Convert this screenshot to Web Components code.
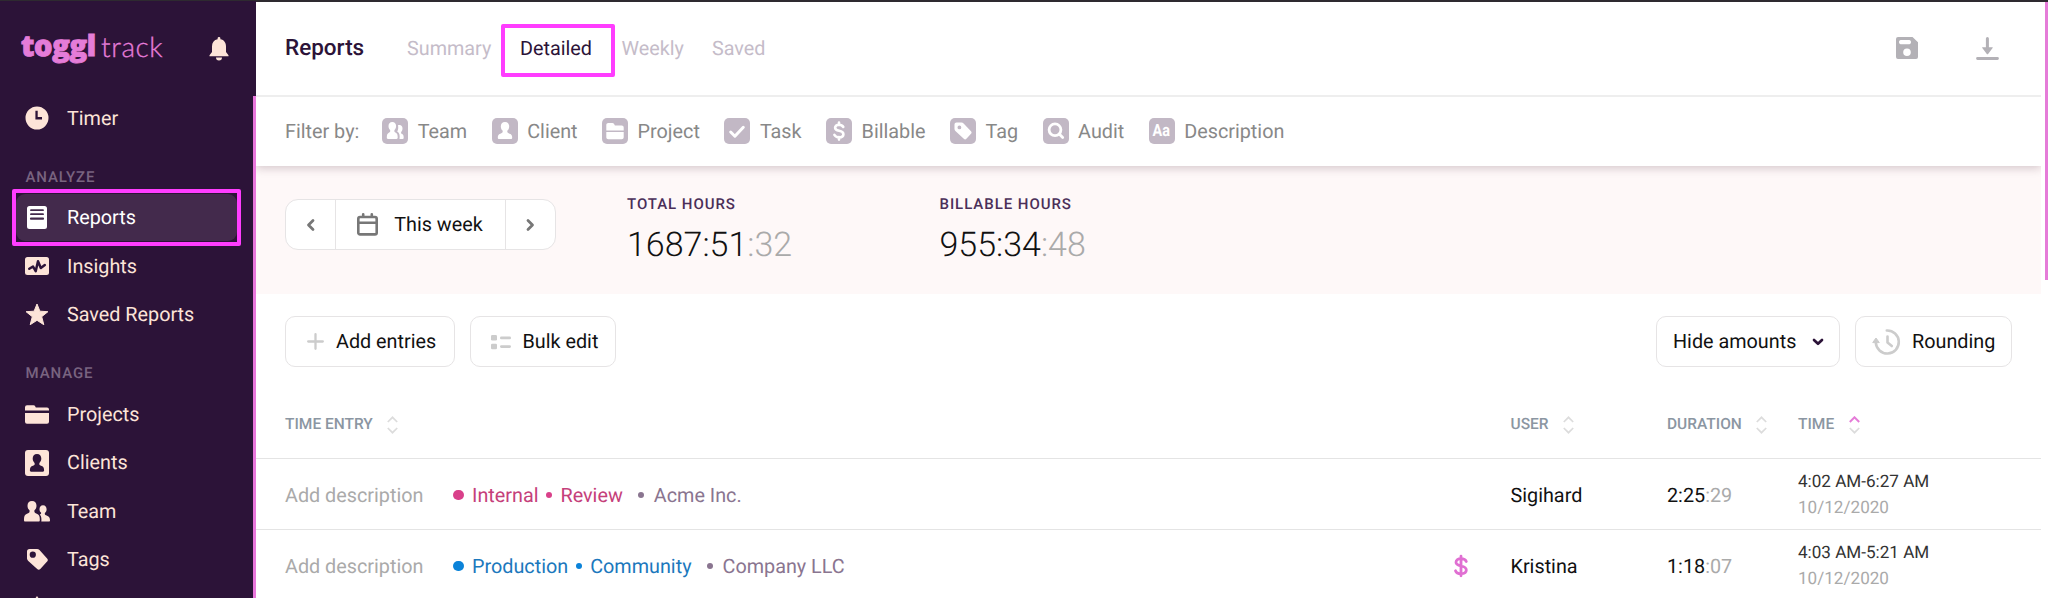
<!DOCTYPE html>
<html lang="en">
<head>
<meta charset="utf-8">
<title>Toggl Track - Reports</title>
<style>
    body {
        margin: 0;
        height: 598px;
        overflow: hidden;
        background: white;
        font-family: Roboto, sans-serif;
        font-size: 19.8px;
        text-rendering: geometricPrecision;
    }
</style>
</head>
<body>
<track-app></track-app>

<script>
// viewBox + content for every icon, all filled with currentColor
const ICONS = {
    bell: ["0 0 20 24", `<path d="M8.6 2.2V1.4a1.4 1.4 0 0 1 2.8 0v.8c3.700.7 5.600 3.300 5.600 7.300v5.500l2.500 3.300v.900H.500v-.900L3 15V9.500c0-4 1.900-6.600 5.600-7.300zM7 20.500h6a3 3 0 0 1-6 0z"/>`],
    clock: ["0 0 24 24", `<path fill-rule="evenodd" d="M12 .5a11.500 11.500 0 1 0 0 23 11.500 11.500 0 0 0 0-23zm-1.600 4.300h2.300v6.300h4.300v2.300h-6.600z"/>`],
    report: ["0 0 20 23", `<path fill-rule="evenodd" d="M2.500 0h15A2.500 2.500 0 0 1 20 2.500v18a2.500 2.500 0 0 1-2.500 2.500h-15A2.500 2.500 0 0 1 0 20.500v-18A2.500 2.500 0 0 1 2.500 0zM4 3.300a.9.9 0 0 0 0 1.800h12a.9.9 0 0 0 0-1.800zM4 7.200A.9.9 0 0 0 4 9.100h12a.9.9 0 0 0 0-1.900zM4 11.600a.9.9 0 0 0 0 2.200h12a.9.9 0 0 0 0-2.200z"/>`],
    pulse: ["0 0 24 18", `<rect width="24" height="18" rx="2.500"/><path d="M4.300 11.800l3.700-2.300 2.700 4.700L13 4.300l2.800 6.700 4-3" fill="none" stroke="#2c1338" stroke-width="2.500" stroke-linecap="round" stroke-linejoin="round"/>`],
    star: ["0 0 24 23", `<path stroke="currentColor" stroke-linejoin="round" d="M12 1l2.900 7.200 8 .500-6.200 5 2.100 8L12 17.300 5.200 21.700l2.100-8-6.200-5 8-.5z"/>`],
    folder: ["0 0 24 19", `<path d="M0 5.500V2.300A2 2 0 0 1 2 .300h6.500a2 2 0 0 1 1.800 1.200l.5 1.100H22a2 2 0 0 1 2 2v.9zM0 8h24v8.700a2 2 0 0 1-2 2H2a2 2 0 0 1-2-2z"/>`],
    client: ["0 0 24 26", `<rect width="24" height="26" rx="3"/><path fill="#2c1338" d="M12 4c2.800 0 4.300 2 4.300 4.600 0 2-.8 3.400-1.900 4.400-.5 1.800.400 2.400 2.300 3.100 1.700.6 2.400 1.800 2.400 4.500 0 .8-.5 1.100-1.200 1.100H6.100c-.7 0-1.200-.3-1.200-1.100 0-2.700.7-3.900 2.400-4.500 1.900-.7 2.800-1.300 2.300-3.100-1.100-1-1.900-2.400-1.900-4.400C7.700 6 9.200 4 12 4z"/>`],
    team: ["0 0 26 21", `<path d="M8 0c2.900 0 4.500 2 4.500 4.700 0 2-.8 3.600-2 4.600-.5 2 .300 2.600 2.300 3.400 2 .7 3 2 3 5.300v1.300c0 .8-.4 1.200-1.200 1.200H1.200C.4 20.500 0 20.100 0 19.300V18c0-3.300 1-4.600 3-5.300 2-.8 2.900-1.400 2.500-3.400-1.200-1-2-2.600-2-4.600C3.500 2 5.100 0 8 0z"/><path d="M19 4.200c2.400 0 3.600 1.700 3.600 4 0 1.700-.7 3-1.700 3.800-.4 1.700.4 2 2.200 2.700 2.200.8 2.900 2.200 2.900 4.800 0 .7-.4 1-1.100 1h-7.600c.5-4-.5-6-1.600-7 1.300-.6 1.600-1 1.300-1.900-1-.8-1.500-1.800-1.500-3.400 0-2.300 1.200-4 3.500-4z"/>`],
    tag: ["0 0 21 21", `<path fill-rule="evenodd" d="M2.500 0H10c1 0 1.800.3 2.500 1l7.600 8.500c1 1.100.9 2.200 0 3.100l-6.800 7.500c-.9 1-2.200 1-3.100 0L1.300 12C.400 11 0 10.300 0 9V2.500A2.500 2.500 0 0 1 2.500 0zm3.300 2.600a3.100 3.100 0 1 0 0 6.200 3.100 3.100 0 0 0 0-6.200z"/>`],
    gear: ["0 0 24 24", `<path d="M12 0l1.800 2.500 3 1.500-1 18H8l-1-18 3.200-1.500z"/>`],
    save: ["0 0 22 22", `<path fill-rule="evenodd" d="M2 0h14.500L22 5.200V20a2 2 0 0 1-2 2H2a2 2 0 0 1-2-2V2a2 2 0 0 1 2-2zm2.500 3a2 2 0 0 0-1.500 2v.300a2 2 0 0 0 1.500 2h9A2 2 0 0 0 15 5.300V5a2 2 0 0 0-1.500-2zM11 11.500a3.800 3.800 0 1 0 0 7.600 3.800 3.800 0 0 0 0-7.600z"/>`],
    download: ["0 0 23 23", `<path d="M9.900 1.400a1.500 1.500 0 0 1 3 0v8.800h3.300c.6 0 .7.500.4.900l-4.500 5.800c-.4.5-.9.500-1.300 0L6.300 11.100c-.3-.4-.2-.9.4-.9h3.200zM1.500 20.100h20a1.400 1.400 0 0 1 0 2.800h-20a1.400 1.400 0 0 1 0-2.800z"/>`],
    "f-team": ["0 0 26 26", `<path d="M10.300 4c2.500 0 3.800 1.800 3.800 4 0 1.800-.6 3.100-1.600 4-.4 1.500 0 2.100 1.400 2.800 1.300.700 1.800 2 1.800 4.700 0 1-.4 1.400-1.200 1.400H6c-.9 0-1.200-.4-1.200-1.400 0-2.700.7-4 2-4.700 1.300-.7 1.700-1.300 1.300-2.800-1-.9-1.600-2.200-1.600-4 0-2.200 1.300-4 3.800-4zM16 7.200c.7-.4 4.500-.8 4.500 3.300 0 1.500-.5 2.600-1.300 3.400-.3 1.100 0 1.600.9 2.100 1.200.7 1.600 1.700 1.600 3.700 0 .8-.3 1.200-1 1.200h-3.200c.4-3.500.2-5.700-2.300-7.300 1-1.700 1.300-4 .8-6.400z"/>`],
    "f-client": ["0 0 26 26", `<path d="M13 4c2.800 0 4.200 1.900 4.200 4.400 0 1.900-.8 3.300-1.800 4.200-.4 1.800.300 2.400 2.300 3.100 1.900.7 2.500 1.800 2.500 4 0 .9-.5 1.300-1.300 1.300H7.100c-.8 0-1.300-.4-1.300-1.300 0-2.200.6-3.300 2.500-4 2-.7 2.700-1.300 2.300-3.100-1-.9-1.800-2.300-1.800-4.200C8.800 5.900 10.200 4 13 4z"/>`],
    "f-project": ["0 0 26 26", `<path d="M4.300 12.600V7c0-1.200.8-2 2-2h4c.8 0 1.400.4 1.800 1.100l.8 1.400h6.800c1.200 0 2 .8 2 2v3.100zM4.300 14h17.400v5.200c0 1.200-.8 2-2 2H6.300c-1.200 0-2-.8-2-2z"/>`],
    "f-task": ["0 0 26 26", `<path d="M6.700 14l4.200 4.200L19.300 9.300" fill="none" stroke="currentColor" stroke-width="3" stroke-linecap="round" stroke-linejoin="round"/>`],
    "f-dollar": ["0 0 26 26", `<path d="M17.300 9c-1-1.700-2.400-2.200-4.300-2.200-2.300 0-3.900 1-3.900 2.900 0 2.100 1.900 2.700 4 3.100 2.600.5 4.300 1.300 4.300 3.500 0 2-1.800 3.100-4.300 3.100-2.300 0-3.700-.8-4.700-2.500M13 4.500V7M13 19v2.600" fill="none" stroke="currentColor" stroke-width="2.600" stroke-linecap="round"/>`],
    "f-tag": ["0 0 26 26", `<path fill-rule="evenodd" d="M6.500 4.500h5c.9 0 1.500.3 2.100.9l7.400 7.800c.8.900.8 1.800 0 2.600l-4.600 5c-.8.800-1.800.8-2.600 0L5.400 13c-.6-.6-.9-1.200-.9-2V6.500c0-1.200.8-2 2-2zm2.900 3a1.900 1.900 0 1 0 0 3.800 1.900 1.900 0 0 0 0-3.800z"/>`],
    "f-audit": ["0 0 26 26", `<g fill="none" stroke="currentColor" stroke-width="2.800" stroke-linecap="round"><circle cx="12" cy="11.800" r="5.900"/><path d="M16.500 16.300l3.200 3.200"/></g>`],
    left: ["0 0 10 12", `<path d="M7 1.500L2.500 6 7 10.500" fill="none" stroke="currentColor" stroke-width="2.800" stroke-linejoin="round" stroke-linecap="round"/>`],
    right: ["0 0 10 12", `<path d="M3 1.500L7.500 6 3 10.500" fill="none" stroke="currentColor" stroke-width="2.800" stroke-linejoin="round" stroke-linecap="round"/>`],
    down: ["0 0 12 8", `<path d="M2 2l4 3.800L10 2" fill="none" stroke="currentColor" stroke-width="2.700" stroke-linejoin="round" stroke-linecap="round"/>`],
    calendar: ["0 0 21 23", `<path d="M3 4h15a1.700 1.700 0 0 1 1.700 1.700V19.700a1.700 1.700 0 0 1-1.700 1.700H3a1.700 1.700 0 0 1-1.700-1.700V5.700A1.700 1.700 0 0 1 3 4zM1.300 9.800h18.400M6.200 1.200v2.500M14.800 1.200v2.500" fill="none" stroke="currentColor" stroke-width="2.600" stroke-linecap="round"/>`],
    plus: ["0 0 17 17", `<path d="M8.500 1.200v14.600M1.200 8.500h14.600" fill="none" stroke="currentColor" stroke-width="2.300" stroke-linecap="round"/>`],
    list: ["0 0 20 16", `<rect x="0" y="1" width="6" height="5.600" rx="1.300"/><rect x="0" y="9.700" width="6" height="5.600" rx="1.300"/><rect x="9" y="2.600" width="11" height="2.700" rx="1.300"/><rect x="9" y="11.200" width="11" height="2.700" rx="1.300"/>`],
    history: ["0 0 28 26", `<g fill="none" stroke="currentColor" stroke-width="2.600" stroke-linecap="round" stroke-linejoin="round"><path d="M14.800 1.500a11.500 11.500 0 1 1-11 12"/><path d="M15.500 7.500V13.500l4.300 3.500"/></g><path d="M4 9L.7 13.600h6.600z" stroke="currentColor" stroke-linejoin="round"/>`],
    dollar: ["0 0 14 22", `<path d="M12.300 6.500C11.500 4.600 9.500 3.700 7 3.700c-3 0-5 1.400-5 3.600 0 2.500 2.300 3.100 5 3.700 3 .6 5.300 1.400 5.300 4 0 2.300-2.200 3.700-5.300 3.700-2.800 0-4.800-1-5.500-3M7 1.200v19.600" fill="none" stroke="currentColor" stroke-width="2.800" stroke-linecap="round"/>`],
};

class AppIcon extends HTMLElement {
    connectedCallback() {
        const [box, body] = ICONS[this.getAttribute("name")];
        const [, , w, h] = box.split(" ");
        this.attachShadow({ mode: "open" }).innerHTML = `
        <style>
            :host { display: block; flex: none; }
            svg { display: block; overflow: visible; }
        </style>
        <svg width="${w}" height="${h}" viewBox="${box}" fill="currentColor">${body}</svg>`;
    }
}
customElements.define("app-icon", AppIcon);

// small helper: element whose shadow root is a function of its attributes
function define(name, render) {
    customElements.define(name, class extends HTMLElement {
        connectedCallback() {
            const template = document.createElement("template");
            template.innerHTML = render(this);
            this.attachShadow({ mode: "open" }).appendChild(template.content.cloneNode(true));
        }
    });
}

define("nav-item", el => `
<style>
    :host {
        display: flex;
        align-items: center;
        height: 48.4px;
        color: #fde4d8;
    }
    .icon {
        width: 26px;
        display: flex;
        justify-content: center;
        margin: 0 17px 0 24px;
    }
    :host([active]) { color: white; }
    .box {
        display: flex;
        align-items: center;
        flex: 1;
        height: 100%;
    }
    :host([active]) .box {
        box-sizing: border-box;
        flex: none;
        width: 229px;
        height: 57.500px;
        margin: -5px 0 -4px 12px;
        border: 4px solid #ff3dff;
        border-radius: 2px;
        background: #2c1338;
        padding: 1.500px 0;
    }
    :host([active]) .fill {
        flex: 1;
        height: 47px;
        border-radius: 9px;
        background: #432a4c;
    }
    .fill { display: flex; align-items: center; }
    :host([active]) .icon { margin-left: 8px; }
</style>
<div class="box"><div class="fill">
    <div class="icon"><app-icon name="${el.getAttribute("icon")}"></app-icon></div>
    <slot></slot>
</div></div>`);

define("nav-section", () => `
<style>
    :host {
        display: flex;
        align-items: center;
        box-sizing: border-box;
        height: 51.300px;
        padding: 17px 0 0 25.500px;
        color: #796480;
        font-size: 15px;
        font-weight: 500;
        letter-spacing: .9px;
    }
</style>
<slot></slot>`);

define("side-bar", () => `
<style>
    :host {
        display: block;
        flex: none;
        box-sizing: border-box;
        width: 256px;
        height: 598px;
        overflow: hidden;
        background: linear-gradient(#e977dc, #e977dc) 253px 95px / 3px 503px no-repeat #2c1338;
    }
    header {
        display: flex;
        align-items: center;
        height: 93px;
        padding-left: 21px;
        color: #e57cd8;
        line-height: 1;
    }
    .bold {
        font: 800 29px/1 "Open Sans";
        width: 80px;
        letter-spacing: -.3px;
        margin-top: -4px;
        -webkit-text-stroke: 1px;
    }
    .thin {
        font: 300 28px/1 Lato;
        letter-spacing: .6px;
        width: 108px;
        margin-top: -4px;
        -webkit-text-stroke: .3px;
    }
    header app-icon { color: #fde4d8; margin-top: 3px; }
</style>
<header><span class="bold">toggl</span><span class="thin">track</span><app-icon name="bell"></app-icon></header>
<nav>
    <nav-item icon="clock">Timer</nav-item>
    <nav-section>ANALYZE</nav-section>
    <nav-item icon="report" active>Reports</nav-item>
    <nav-item icon="pulse">Insights</nav-item>
    <nav-item icon="star">Saved Reports</nav-item>
    <nav-section>MANAGE</nav-section>
    <nav-item icon="folder">Projects</nav-item>
    <nav-item icon="client">Clients</nav-item>
    <nav-item icon="team">Team</nav-item>
    <nav-item icon="tag">Tags</nav-item>
    <nav-item icon="gear"></nav-item>
</nav>`);

define("report-header", () => `
<style>
    :host {
        display: flex;
        align-items: center;
        box-sizing: border-box;
        height: 95px;
        border-bottom: 2px solid #eee;
        padding: 0 42px 0 29px;
    }
    h1 {
        margin: -1px 0 0;
        width: 122px;
        font-size: 22.500px;
        font-weight: 500;
        color: #2c1338;
    }
    nav { display: flex; align-items: center; color: #c5bcc9; }
    .tab { width: 87px; }
    .on {
        box-sizing: border-box;
        width: 114px;
        height: 53px;
        margin: 3px 7px 0 6.500px;
        padding: 9.300px 0 0 15.500px;
        border: 4px solid #ff3dff;
        border-radius: 2px;
        color: #2c1338;
    }
    .weekly { width: 90.500px; }
    .tools { display: flex; gap: 58px; margin-left: auto; color: #b3b1b6; }
</style>
<h1>Reports</h1>
<nav>
    <span class="tab">Summary</span>
    <span class="on">Detailed</span>
    <span class="weekly">Weekly</span>
    <span>Saved</span>
</nav>
<div class="tools"><app-icon name="save"></app-icon><app-icon name="download"></app-icon></div>`);

define("filter-chip", el => `
<style>
    :host { display: flex; align-items: center; gap: 9.600px; }
    .icon {
        display: flex;
        align-items: center;
        justify-content: center;
        width: 26px;
        height: 26px;
        margin-top: -1px;
        border-radius: 5px;
        background: #c2b8c5;
        color: white;
    }
    b { font-size: 17px; transform: scaleX(.85); }
</style>
<span class="icon">${el.hasAttribute("icon") ? `<app-icon name="${el.getAttribute("icon")}"></app-icon>` : "<b>Aa</b>"}</span>
<slot></slot>`);

define("filter-bar", () => `
<style>
    :host {
        display: flex;
        align-items: center;
        gap: 24.400px;
        box-sizing: border-box;
        height: 69px;
        padding: 0 0 0 29px;
        color: #888;
        background: white;
        position: relative;
        box-shadow: 0 2px 9px rgba(60, 20, 40, .22);
        clip-path: inset(0 0 -20px 0);
    }
    .label { margin-right: -1.500px; }
</style>
<span class="label">Filter by:</span>
<filter-chip icon="f-team">Team</filter-chip>
<filter-chip icon="f-client">Client</filter-chip>
<filter-chip icon="f-project">Project</filter-chip>
<filter-chip icon="f-task">Task</filter-chip>
<filter-chip icon="f-dollar">Billable</filter-chip>
<filter-chip icon="f-tag">Tag</filter-chip>
<filter-chip icon="f-audit">Audit</filter-chip>
<filter-chip>Description</filter-chip>`);

define("date-range", () => `
<style>
    :host {
        display: grid;
        grid-template-columns: 49.500px 1fr 49px;
        box-sizing: border-box;
        width: 271.500px;
        height: 51px;
        border: 1.500px solid #e6e4e5;
        border-radius: 13px;
        background: white;
        color: #777;
    }
    div { display: flex; align-items: center; justify-content: center; }
    .prev { padding-left: 2px; }
    .next { padding-right: 2px; }
    .label {
        gap: 16px;
        border: solid #e6e4e5;
        border-width: 0 1px;
        padding-right: 1px;
        color: #111;
    }
    .label app-icon { color: #777; }
</style>
<div class="prev"><app-icon name="left"></app-icon></div>
<div class="label"><app-icon name="calendar"></app-icon><slot></slot></div>
<div class="next"><app-icon name="right"></app-icon></div>`);

define("hours-total", el => `
<style>
    :host { display: block; width: 312.500px; }
    h2 {
        margin: 0;
        font-size: 15px;
        line-height: 18px;
        font-weight: 500;
        letter-spacing: .95px;
        color: #4b2f59;
    }
    p {
        margin: 12px 0 0;
        font-size: 34px;
        line-height: 40px;
        font-weight: 300;
        color: #111;
    }
    i { font-style: normal; color: #aaa; }
</style>
<h2>${el.getAttribute("label")}</h2>
<p><slot></slot><i>${el.getAttribute("seconds")}</i></p>`);

define("outline-button", el => `
<style>
    :host {
        display: flex;
        align-items: center;
        box-sizing: border-box;
        height: 51px;
        border: 1.500px solid #e6e4e5;
        border-radius: 10px;
        padding: 0 16px;
        color: #111;
        white-space: nowrap;
    }
    app-icon { color: #ccc; margin-right: 12px; }
    .arrow { color: #2c1338; margin: 0 0 0 16px; }
</style>
${el.hasAttribute("icon") ? `<app-icon name="${el.getAttribute("icon")}"></app-icon>` : ""}
<slot></slot>
${el.hasAttribute("menu") ? `<app-icon class="arrow" name="down"></app-icon>` : ""}`);

define("sort-label", () => `
<style>
    :host {
        display: flex;
        align-items: center;
        gap: 14.500px;
        font-size: 15.500px;
        font-weight: 500;
        color: #8b96a2;
    }
    svg { display: block; margin-top: 1px; fill: none; stroke: #dcdcdc; stroke-width: 1.700; }
    :host([asc]) .up { stroke: #e57cd8; stroke-width: 2; }
</style>
<slot></slot>
<svg width="11" height="18" viewBox="0 0 11 18"><path class="up" d="M.8 6L5.500 1.300 10.200 6"/><path d="M.8 12l4.700 4.700 4.700-4.700"/></svg>`);

// shared column track list for the header and the rows
const COLUMNS = "1169px 56.500px 156.500px 131px 1fr";

define("table-head", () => `
<style>
    :host {
        display: grid;
        grid-template-columns: ${COLUMNS};
        align-items: center;
        box-sizing: border-box;
        height: 91px;
        padding: 23px 0 0 29px;
    }
    .wide { grid-column: span 2; }
</style>
<sort-label class="wide">TIME ENTRY</sort-label>
<sort-label>USER</sort-label>
<sort-label>DURATION</sort-label>
<sort-label asc>TIME</sort-label>`);

define("entry-row", el => {
    const get = name => el.getAttribute(name);
    return `
<style>
    :host {
        display: grid;
        grid-template-columns: ${COLUMNS};
        align-items: center;
        box-sizing: border-box;
        height: 71px;
        border-top: 1.500px solid #e4e4e4;
        padding: 2px 0 0 29px;
        color: #111;
    }
    .entry { display: flex; align-items: center; color: ${get("color")}; }
    .desc { width: 168px; color: #aaa; }
    .dot, .sep { border-radius: 50%; background: ${get("dot")}; }
    .dot { width: 10.500px; height: 10.500px; margin-right: 8.500px; }
    .sep { width: 6px; height: 6px; margin: 0 8px; }
    .client { color: #8a7590; display: flex; align-items: center; }
    .client .sep { margin: 0 10px 0 15px; background: currentColor; }
    .bill { color: #e06fd2; }
    .sec { color: #aaa; }
    .time { font-size: 17.100px; line-height: 25.500px; padding-top: 1.500px; color: #333; }
    .time div { color: #aaa; }
</style>
<div class="entry">
    <span class="desc">Add description</span>
    <span class="dot"></span>
    <span>${get("project")}</span><span class="sep"></span><span>${get("task")}</span>
    <span class="client"><span class="sep"></span>${get("client")}</span>
</div>
<div class="bill">${el.hasAttribute("billable") ? `<app-icon name="dollar"></app-icon>` : ""}</div>
<div>${get("user")}</div>
<div>${get("duration")}<span class="sec">${get("seconds")}</span></div>
<div class="time">${get("time")}<div>${get("date")}</div></div>`;
});

define("track-app", () => `
<style>
    :host { display: block; height: 598px; }
    .top { height: 1.500px; background: #2e2a30; }
    .page { display: flex; margin-top: .500px; height: 596px; }
    side-bar { margin-top: -1px; }
    main { flex: none; width: 1785px; }
    .summary {
        display: flex;
        box-sizing: border-box;
        height: 128px;
        padding: 33px 0 0 28.500px;
        background: #fef8f8;
    }
    .totals { display: flex; margin: -4px 0 0 71px; }
    .actions {
        display: flex;
        gap: 15px;
        padding: 22px 29px 0 28.500px;
    }
    .add { width: 170px; padding-left: 21.500px; }
    .bulk { width: 146px; padding-left: 20px; }
    .hide { width: 184px; }
    .rounding { width: 157px; }
    .right { display: flex; gap: 15px; margin-left: auto; }
    .scroll { width: 3px; height: 278px; margin-left: 4px; background: #e57cd8; }
</style>
<div class="top"></div>
<div class="page">
    <side-bar></side-bar>
    <main>
        <report-header></report-header>
        <filter-bar></filter-bar>
        <div class="summary">
            <date-range>This week</date-range>
            <div class="totals">
                <hours-total label="TOTAL HOURS" seconds=":32">1687:51</hours-total>
                <hours-total label="BILLABLE HOURS" seconds=":48">955:34</hours-total>
            </div>
        </div>
        <div class="actions">
            <outline-button class="add" icon="plus">Add entries</outline-button>
            <outline-button class="bulk" icon="list">Bulk edit</outline-button>
            <div class="right">
                <outline-button class="hide" menu>Hide amounts</outline-button>
                <outline-button class="rounding" icon="history">Rounding</outline-button>
            </div>
        </div>
        <table-head></table-head>
        <entry-row color="#c5407a" dot="#d9408a" project="Internal" task="Review" client="Acme Inc." user="Sigihard"
            duration="2:25" seconds=":29" time="4:02 AM-6:27 AM" date="10/12/2020"></entry-row>
        <entry-row color="#1b78bd" dot="#0b83d9" project="Production" task="Community" client="Company LLC" user="Kristina" billable
            duration="1:18" seconds=":07" time="4:03 AM-5:21 AM" date="10/12/2020"></entry-row>
    </main>
    <div class="scroll"></div>
</div>`);
</script>
</body>
</html>
